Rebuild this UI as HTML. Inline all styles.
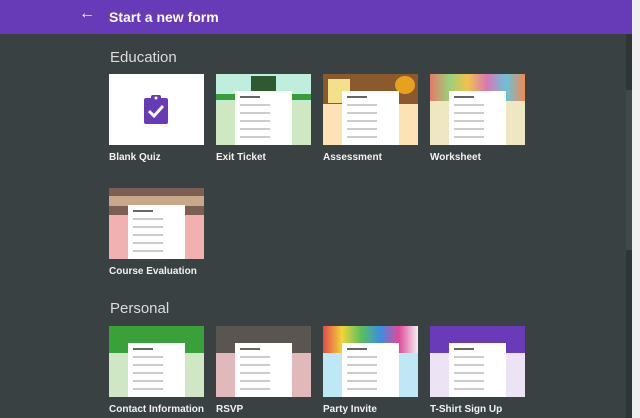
<!DOCTYPE html><html><head><style>
body{margin:0;width:640px;height:418px;overflow:hidden;background:#394142;font-family:"Liberation Sans",sans-serif;position:relative}
.hdr{position:absolute;left:0;top:0;width:632px;height:34px;background:#673ab7}
.hdr .t{position:absolute;left:109px;top:9px;color:#fff;font-size:14px;font-weight:bold}
.hdr .a{position:absolute;left:79px;top:5px;color:#fff;font-size:16px}
.sb{position:absolute;left:626px;top:34px;width:6px;height:384px;background:#2f3536}
.sb2{position:absolute;left:626px;top:90px;width:6px;height:160px;background:#41484a}
.edge{position:absolute;left:632px;top:0;width:8px;height:418px;background:#f0f0f0}
h2{position:absolute;margin:0;font-weight:normal;color:#dcdcdc;font-size:15px;left:110px}
.th{position:absolute;width:95px;height:71px;overflow:hidden}
.th .top{position:absolute;left:0;top:0;width:95px;height:27px}
.th .card{position:absolute;left:19px;top:17px;width:57px;height:60px;background:#fff}
.th .card i{display:block;height:2px;background:#ccc;margin:6px 5px 0;width:30px}
.th .card i:first-child{background:#666;width:20px;margin-top:5px}
.lb{position:absolute;color:#f2f2f2;font-size:10px;font-weight:bold}
</style></head><body>
<div class="hdr"><span class="a">&#8592;</span><span class="t">Start a new form</span></div>
<div class="sb"></div><div class="sb2"></div><div class="edge"></div>
<h2 style="top:49px">Education</h2>
<div class="th" style="left:109px;top:74px;background:#fff">
<svg style="position:absolute;left:33px;top:20px" width="28" height="30" viewBox="0 0 28 30"><rect x="2" y="4" width="24" height="26" rx="2" fill="#673ab7"/><rect x="9" y="1" width="10" height="6" rx="2" fill="#673ab7"/><circle cx="14" cy="4" r="1.5" fill="#fff"/><path d="M7 17l5 5 9-10" stroke="#fff" stroke-width="3" fill="none"/></svg></div>
<div class="lb" style="left:109px;top:152px">Blank Quiz</div>
<div class="th" style="left:216px;top:74px;background:#cde8c3"><div class="top" style="background:#bfeedd"></div><div style="position:absolute;left:35px;top:2px;width:25px;height:16px;background:#2f5a30"></div><div style="position:absolute;left:0;top:20px;width:95px;height:6px;background:#3a9c3a"></div><div class="card"><i></i><i></i><i></i><i></i><i></i><i></i></div></div>
<div class="lb" style="left:216px;top:152px">Exit Ticket</div>
<div class="th" style="left:323px;top:74px;background:#fde2b5"><div class="top" style="background:#8a5a2e;height:30px"></div><div style="position:absolute;left:5px;top:5px;width:22px;height:24px;background:#f3e08a"></div><div style="position:absolute;left:72px;top:2px;width:20px;height:18px;border-radius:50%;background:#e8a11c"></div><div class="card"><i></i><i></i><i></i><i></i><i></i><i></i></div></div>
<div class="lb" style="left:323px;top:152px">Assessment</div>
<div class="th" style="left:430px;top:74px;background:#efe6c2"><div class="top" style="background:linear-gradient(90deg,#e4786b,#9bd07a,#f2c14b,#d877b5,#6bc2d9,#f08a52)"></div><div class="card"><i></i><i></i><i></i><i></i><i></i><i></i></div></div>
<div class="lb" style="left:430px;top:152px">Worksheet</div>
<div class="th" style="left:109px;top:188px;background:#f2b1b1"><div class="top" style="background:#7a5f52"></div><div style="position:absolute;left:0;top:8px;width:95px;height:10px;background:#c9a78a"></div><div class="card" style="left:19px"><i></i><i></i><i></i><i></i><i></i><i></i></div></div>
<div class="lb" style="left:109px;top:266px">Course Evaluation</div>
<h2 style="top:300px">Personal</h2>
<div class="th" style="left:109px;top:326px;background:#cfe7c5"><div class="top" style="background:#3aa13a"></div><div class="card"><i></i><i></i><i></i><i></i><i></i><i></i></div></div>
<div class="lb" style="left:109px;top:404px">Contact Information</div>
<div class="th" style="left:216px;top:326px;background:#e2b9bb"><div class="top" style="background:#5a5550"></div><div class="card"><i></i><i></i><i></i><i></i><i></i><i></i></div></div>
<div class="lb" style="left:216px;top:404px">RSVP</div>
<div class="th" style="left:323px;top:326px;background:#bfe8f7"><div class="top" style="background:linear-gradient(90deg,#e24a4a,#f2d43a,#5bc05b,#3a8fe0,#e04a9a,#f2f2f2)"></div><div class="card"><i></i><i></i><i></i><i></i><i></i><i></i></div></div>
<div class="lb" style="left:323px;top:404px">Party Invite</div>
<div class="th" style="left:430px;top:326px;background:#ece3f5"><div class="top" style="background:#6a3bb8"></div><div class="card"><i></i><i></i><i></i><i></i><i></i><i></i></div></div>
<div class="lb" style="left:430px;top:404px">T-Shirt Sign Up</div>
</body></html>
